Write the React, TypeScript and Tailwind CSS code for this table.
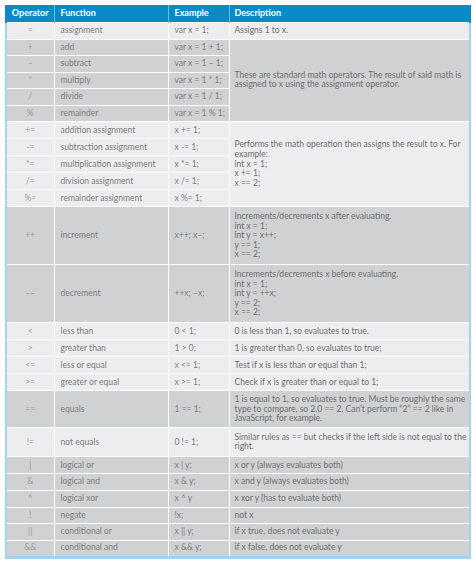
import React from 'react';

type Row = {
  op: string;
  fn: string;
  ex: string;
  h: number;
  dark: boolean;
  desc?: React.ReactNode;
  span?: number;
};

const br = (lines: string[]) =>
  lines.map((l, i) => (
    <React.Fragment key={i}>
      {l}
      {i < lines.length - 1 && <br />}
    </React.Fragment>
  ));

const rows: Row[] = [
  { op: '=', fn: 'assignment', ex: 'var x = 1;', h: 17, dark: false, desc: 'Assigns 1 to x.' },
  {
    op: '+', fn: 'add', ex: 'var x = 1 + 1;', h: 16.6, dark: true, span: 5,
    desc: br(['These are standard math operators. The result of said math is', 'assigned to x using the assignment operator.']),
  },
  { op: '–', fn: 'subtract', ex: 'var x = 1 – 1;', h: 16.6, dark: true },
  { op: '*', fn: 'multiply', ex: 'var x = 1 * 1;', h: 16.6, dark: true },
  { op: '/', fn: 'divide', ex: 'var x = 1 / 1;', h: 16.6, dark: true },
  { op: '%', fn: 'remainder', ex: 'var x = 1 % 1;', h: 16.6, dark: true },
  {
    op: '+=', fn: 'addition assignment', ex: 'x += 1;', h: 17, dark: false, span: 5,
    desc: br(['Performs the math operation then assigns the result to x.  For', 'example:', 'int x = 1;', 'x += 1;', 'x == 2;']),
  },
  { op: '-=', fn: 'subtraction assignment', ex: 'x -= 1;', h: 17, dark: false },
  { op: '*=', fn: 'multiplication assignment', ex: 'x *= 1;', h: 17, dark: false },
  { op: '/=', fn: 'division assignment', ex: 'x /= 1;', h: 17, dark: false },
  { op: '%=', fn: 'remainder assignment', ex: 'x %= 1;', h: 17, dark: false },
  {
    op: '++', fn: 'increment', ex: 'x++; x–;', h: 58, dark: true,
    desc: br(['Increments/decrements x after evaluating.', 'int x = 1;', 'int y = x++;', 'y == 1;', 'x == 2;']),
  },
  {
    op: '––', fn: 'decrement', ex: '++x; –x;', h: 58, dark: true,
    desc: br(['Increments/decrements x before evaluating.', 'int x = 1;', 'int y = ++x;', 'y == 2;', 'x == 2;']),
  },
  { op: '<', fn: 'less than', ex: '0 < 1;', h: 17, dark: false, desc: '0 is less than 1, so evaluates to true.' },
  { op: '>', fn: 'greater than', ex: '1 > 0;', h: 17, dark: false, desc: '1 is greater than 0, so evaluates to true;' },
  { op: '<=', fn: 'less or equal', ex: 'x <= 1;', h: 17, dark: false, desc: 'Test if x is less than or equal than 1;' },
  { op: '>=', fn: 'greater or equal', ex: 'x >= 1;', h: 17, dark: false, desc: 'Check if x is greater than or equal to 1;' },
  {
    op: '==', fn: 'equals', ex: '1 == 1;', h: 37, dark: true,
    desc: br([
      '1 is equal to 1, so evaluates to true. Must be roughly the same',
      'type to compare, so 2.0 == 2. Can\u2019t perform \u201c2\u201d == 2 like in',
      'JavaScript, for example.',
    ]),
  },
  {
    op: '!=', fn: 'not equals', ex: '0 != 1;', h: 29, dark: false,
    desc: br(['Similar rules as == but checks if the left side is not equal to the', 'right.']),
  },
  { op: '|', fn: 'logical or', ex: 'x | y;', h: 16.7, dark: true, desc: 'x or y (always evaluates both)' },
  { op: '&', fn: 'logical and', ex: 'x & y;', h: 16.7, dark: true, desc: 'x and y (always evaluates both)' },
  { op: '^', fn: 'logical xor', ex: 'x ^ y', h: 16.7, dark: true, desc: 'x xor y (has to evaluate both)' },
  { op: '!', fn: 'negate', ex: '!x;', h: 16.7, dark: true, desc: 'not x' },
  { op: '||', fn: 'conditional or', ex: 'x || y;', h: 16.7, dark: true, desc: 'if x true, does not evaluate y' },
  { op: '&&', fn: 'conditional and', ex: 'x && y;', h: 16.7, dark: true, desc: 'if x false, does not evaluate y' },
];

export default function App() {
  return (
    <div className="w-[474px] h-[567px] bg-white pt-[5px] pl-[5px]" style={{ fontFamily: 'Lato, "Noto Sans", sans-serif' }}>
      <table className="w-[464px] table-fixed border-collapse border-x-2 border-b-[3px] border-[#a3d4ec] text-[8.5px] leading-[9.6px]">
        <colgroup>
          <col className="w-[48px]" />
          <col className="w-[114px]" />
          <col className="w-[61px]" />
          <col className="w-[241px]" />
        </colgroup>
        <thead>
          <tr className="h-[17px] bg-[#0b8ac8] text-white text-[9px] font-bold">
            <th className="border-r border-[#6bb8e0] border-l-2 border-l-[#0b8ac8] font-bold text-center">Operator</th>
            <th className="border-x border-[#6bb8e0] font-bold text-left pl-[6px]">Function</th>
            <th className="border-x border-[#6bb8e0] font-bold text-left pl-[6px]">Example</th>
            <th className="border-l border-[#6bb8e0] border-r-2 border-r-[#0b8ac8] font-bold text-left pl-[5px]">Description</th>
          </tr>
        </thead>
        <tbody>
          {rows.map((r, i) => {
            const bg = r.dark ? 'bg-[#d0d1d3]' : 'bg-[#ededef]';
            return (
              <tr key={i} style={{ height: r.h }}>
                <td className={`${bg} border border-white text-center text-[#9a9a9a]`}>{r.op}</td>
                <td className={`${bg} border border-white pl-[6px] text-[#7c7c7c] whitespace-nowrap`}>{r.fn}</td>
                <td className={`${bg} border border-white pl-[6px] text-[#7c7c7c] whitespace-nowrap`}>{r.ex}</td>
                {r.desc !== undefined && (
                  <td rowSpan={r.span ?? 1} className={`${bg} border border-white pl-[5px] text-[#6e6e6e] whitespace-nowrap align-middle`}>
                    {r.desc}
                  </td>
                )}
              </tr>
            );
          })}
        </tbody>
      </table>
    </div>
  );
}
